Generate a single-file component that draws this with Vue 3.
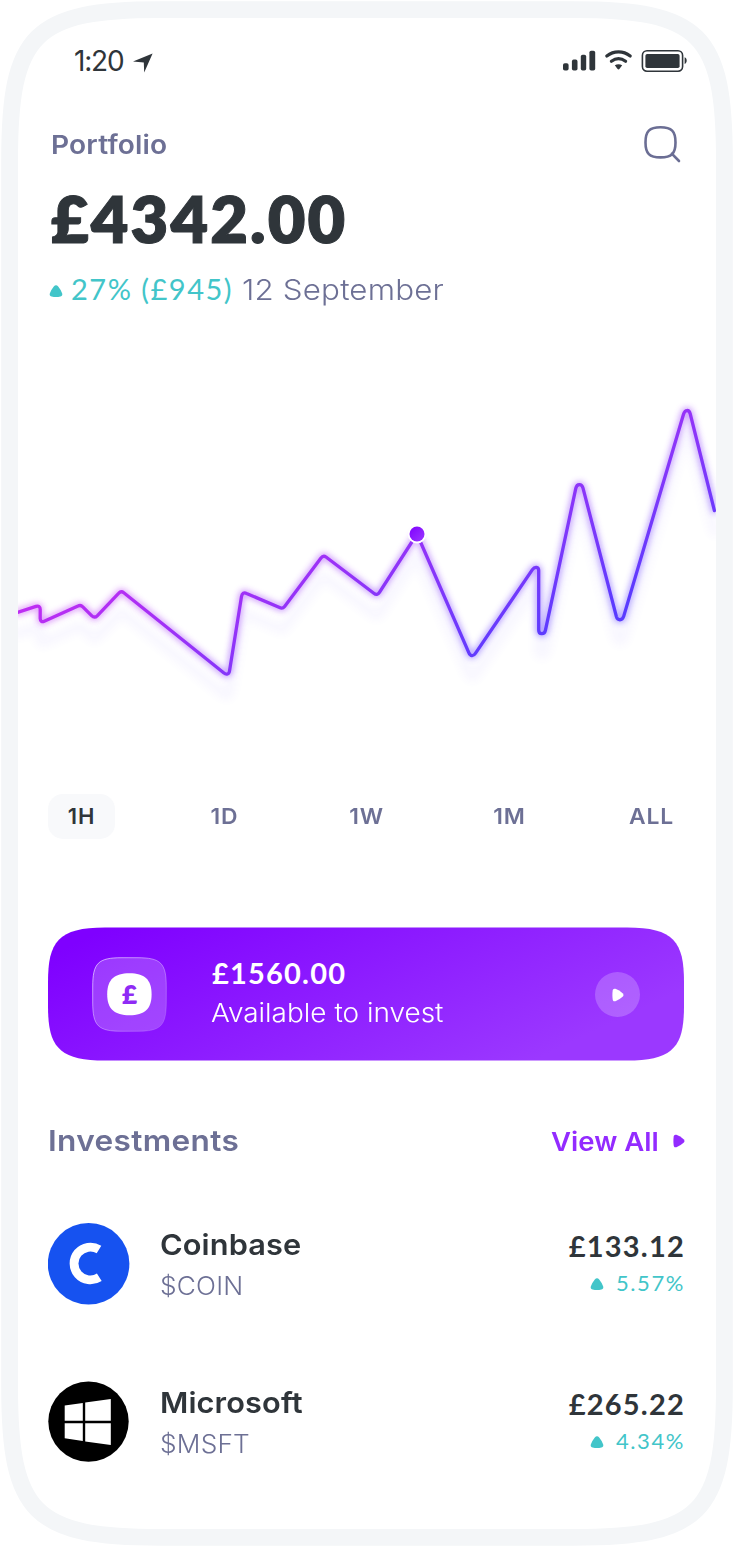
<script setup>
const ranges = ['1H', '1D', '1W', '1M', 'ALL']
const holdings = [
  { id: 'coin', name: 'Coinbase', ticker: '$COIN', price: '£133.12', change: '5.57%' },
  { id: 'msft', name: 'Microsoft', ticker: '$MSFT', price: '£265.22', change: '4.34%' }
]
const line = [
  'M17 612.6 L36 606.4 C38.6 605.6 40.2 606.8 40.2 609.2 V618.6 C40.2 621.2 42 622.2 44.2 621.2',
  'L78 606 C80 605 81.4 605.4 82.8 606.8 L91.6 615.6 C93.6 617.6 95.4 617.6 97.2 615.8',
  'L118.8 593.2 C120.4 591.4 122 591.4 123.8 592.8 L223.6 672.8 C226.4 675 229 674.4 229.5 671',
  'L241.5 596.4 C242.1 593 244 592.2 246.6 593.4 L279.6 607.6 C281.6 608.6 283.2 608.2 284.6 606.4',
  'L320.8 558.2 C322.4 556 324 555.6 326 557 L373.8 593.2 C376 595 378 594.8 379.6 592.2',
  'L417 534 L468.8 652.6 C470.4 656.4 473.2 656.6 475.4 653.4 L532.4 569.6 C534.8 566.2 538.7 566.8 538.7 570.6',
  'V630 C538.7 634.8 544.5 634.8 545.4 630.4 L575.8 488.4 C576.8 483.4 581.8 483.4 583 488.2',
  'L616.4 616.6 C617.6 620.8 622.2 620.8 623.6 616.6 L683.6 414 C685 409.4 689 409.4 690.2 413.8 L714.4 510.6'
].join(' ')
</script>

<template>
  <div class="phone">
    <svg class="frame" viewBox="0 0 733 1546">
      <path d="M160 9.6 H574 C700 9.6 724.4 34 724.4 160 V1387 C724.4 1513 700 1537.4 574 1537.4 H160 C34 1537.4 9.6 1513 9.6 1387 V160 C9.6 34 34 9.6 160 9.6 Z" />
    </svg>

    <div class="status">
      <span class="time">1:20</span>
      <svg class="arrow" width="20" height="20" viewBox="0 0 20 20"><path d="M19.6 .6 L11.2 19.6 L10.8 9.6 L0 8.6 Z" /></svg>
      <svg class="signals" width="126" height="22" viewBox="0 0 126 22">
        <rect x="1" y="13.2" width="5.6" height="7.4" rx="1.8" />
        <rect x="9.9" y="9.6" width="5.6" height="11" rx="1.8" />
        <rect x="18.8" y="4.8" width="5.4" height="15.8" rx="1.8" />
        <rect x="27.4" y="0.8" width="5.8" height="19.8" rx="1.8" />
        <g class="wifi">
          <path d="M44.8 6 C51.8 .5 61.2 .5 68.2 6" />
          <path d="M49.4 11.2 C53.8 7.9 59.2 7.9 63.6 11.2" />
        </g>
        <path d="M52.8 15.3 Q56.5 13 60.2 15.3 L57.6 18.8 Q56.5 20 55.4 18.8 Z" />
        <rect class="case" x="80.4" y=".8" width="40.2" height="20.4" rx="4.6" />
        <rect x="83.4" y="4" width="34.2" height="14" rx="1.8" />
        <path d="M122.6 7.2 C125.4 8.2 125.4 12.8 122.6 14 Z" />
      </svg>
    </div>

    <header class="head">
      <span class="portfolio">Portfolio</span>
      <svg width="40" height="38" viewBox="0 0 40 38">
        <path d="M18.5 2.3 C29.6 2.3 33.5 6.2 33.5 17.4 C33.5 28.5 29.6 32.4 18.5 32.4 C7.4 32.4 3.5 28.5 3.5 17.4 C3.5 6.2 7.4 2.3 18.5 2.3 Z M29.8 28.6 L37 36" />
      </svg>
    </header>
    <div class="total">£4342.00</div>
    <div class="delta">
      <svg class="up" width="14" height="12" viewBox="0 0 14 12"><path d="M4.8 1.6 Q7 -1.2 9.2 1.6 Q12 5 13.2 8.6 C13.6 10.4 12.8 11 11.4 11.4 Q7 12.4 2.6 11.4 C1.2 11 .4 10.4 .8 8.6 Q2 5 4.8 1.6 Z" /></svg>
      <span class="gain">27% (£945)</span>
      <span class="date">12 September</span>
    </div>

    <svg class="chart" width="698" height="340" viewBox="18 380 698 340">
      <defs>
        <linearGradient id="stroke" gradientUnits="userSpaceOnUse" x1="18" y1="600" x2="132" y2="840">
          <stop offset="0" stop-color="#c22cf2" />
          <stop offset=".35" stop-color="#9e31f7" />
          <stop offset=".7" stop-color="#7a38fb" />
          <stop offset="1" stop-color="#593bff" />
        </linearGradient>
        <linearGradient id="dot" x1="0" y1="0" x2="1" y2="1">
          <stop offset="0" stop-color="#7f00ff" />
          <stop offset="1" stop-color="#9b38ff" />
        </linearGradient>
        <filter id="glow" filterUnits="userSpaceOnUse" x="0" y="370" width="733" height="360"><feGaussianBlur stdDeviation="3.2" /></filter>
        <filter id="shade" filterUnits="userSpaceOnUse" x="0" y="370" width="733" height="360"><feGaussianBlur stdDeviation="4.5" /></filter>
      </defs>
      <path class="line shade" :d="line" transform="translate(0 21)" />
      <path class="line glow" :d="line" />
      <path class="line" :d="line" />
      <circle cx="417" cy="534.2" r="9.2" fill="#fff" />
      <circle cx="417" cy="534" r="7.5" fill="url(#dot)" />
    </svg>

    <nav class="ranges">
      <span v-for="(r, i) in ranges" :key="r" class="range" :class="{ active: i === 0 }">{{ r }}</span>
    </nav>

    <section class="card">
      <svg class="card-bg" viewBox="0 0 637 134">
        <defs>
          <linearGradient id="card" gradientUnits="userSpaceOnUse" x1="60" y1="0" x2="240" y2="380">
            <stop offset="0" stop-color="#7f00ff" />
            <stop offset=".72" stop-color="#9b38ff" />
            <stop offset="1" stop-color="#9b38ff" />
          </linearGradient>
        </defs>
        <path fill="url(#card)" d="M57 .5 H579 C626 .5 636 15 636 55 V79 C636 119 626 133.6 579 133.6 H57 C10 133.6 0 119 0 79 V55 C0 15 10 .5 57 .5 Z" />
      </svg>
      <div class="coin">
        <svg class="coin-bg" viewBox="0 0 75 75">
          <defs>
            <linearGradient id="edge" x1="0" y1="0" x2="1" y2="1">
              <stop offset="0" stop-color="#fff" stop-opacity=".65" />
              <stop offset="1" stop-color="#fff" stop-opacity=".08" />
            </linearGradient>
          </defs>
          <path fill="#fff" fill-opacity=".21" stroke="url(#edge)" d="M30 .7 H45 C69 .7 74.3 6 74.3 30 V45 C74.3 69 69 74.3 45 74.3 H30 C6 74.3 .7 69 .7 45 V30 C.7 6 6 .7 30 .7 Z" />
          <path fill="#fff" d="M37.5 16.2 C52.5 16.2 59.6 22.5 59.6 37.2 C59.6 52 52.5 58.2 37.5 58.2 C22.5 58.2 15.2 52 15.2 37.2 C15.2 22.5 22.5 16.2 37.5 16.2 Z" />
        </svg>
        <span class="pound">£</span>
      </div>
      <div class="cash">
        <div class="cash-sum">£1560.00</div>
        <div class="cash-note">Available to invest</div>
      </div>
      <div class="go">
        <svg width="12" height="14" viewBox="0 0 12 14"><path d="M3.4 .8 Q7.4 2.2 10.6 5.2 Q12.4 7 10.6 8.8 Q7.4 11.8 3.4 13.2 C1.8 13.7 1 13 .7 11.4 Q.1 7 .7 2.6 C1 1 1.8 .3 3.4 .8 Z" /></svg>
      </div>
    </section>

    <div class="section">
      <h2 class="title">Investments</h2>
      <a class="all"><span class="all-text">View All</span>
        <svg width="12" height="14" viewBox="0 0 12 14"><path d="M3.4 .8 Q7.4 2.2 10.6 5.2 Q12.4 7 10.6 8.8 Q7.4 11.8 3.4 13.2 C1.8 13.7 1 13 .7 11.4 Q.1 7 .7 2.6 C1 1 1.8 .3 3.4 .8 Z" /></svg>
      </a>
    </div>

    <div v-for="h in holdings" :key="h.id" class="holding">
      <svg v-if="h.id === 'coin'" width="82" height="82" viewBox="0 0 82 82">
        <circle cx="40.6" cy="40.8" r="40.8" fill="#1652f0" />
        <path d="M51.6 26.5 A16.4 16.4 0 1 0 51.9 54.3" fill="none" stroke="#fff" stroke-width="8.8" transform="translate(-.6 0)" />
      </svg>
      <svg v-else width="82" height="82" viewBox="0 0 82 82">
        <circle cx="40.5" cy="40.6" r="40.2" />
        <path fill="#fff" d="M16.7 24.6 L34.8 22 V39.8 H16.7 Z M37.2 21.5 L62.8 18 V39.8 H37.2 Z M16.7 42.2 H34.8 V60 L16.7 57.3 Z M37.2 42.2 H62.8 V64 L37.2 60.4 Z" />
      </svg>
      <div class="names">
        <div class="name">{{ h.name }}</div>
        <div class="ticker">{{ h.ticker }}</div>
      </div>
      <div class="values">
        <div class="price">{{ h.price }}</div>
        <div class="change">
          <svg class="up" width="14" height="12" viewBox="0 0 14 12"><path d="M4.8 1.6 Q7 -1.2 9.2 1.6 Q12 5 13.2 8.6 C13.6 10.4 12.8 11 11.4 11.4 Q7 12.4 2.6 11.4 C1.2 11 .4 10.4 .8 8.6 Q2 5 4.8 1.6 Z" /></svg>
          <span>{{ h.change }}</span>
        </div>
      </div>
    </div>
  </div>
</template>

<style>
body { background: #fff; }
</style>

<style scoped>
.phone {
  position: relative;
  box-sizing: border-box;
  width: 733px;
  height: 1546px;
  padding: 43px 48px 0;
  overflow: hidden;
  font-family: Inter, "Liberation Sans", sans-serif;
  color: #2f353a;
  white-space: nowrap;
}
.frame { position: absolute; left: 0; top: 0; width: 733px; height: 1546px; fill: #fff; stroke: #f4f6f8; stroke-width: 16.8; }
.status { position: relative; display: flex; height: 34px; margin-right: -3px; margin-left: 26px; line-height: 36px; }
.time { width: 59px; font-size: 28px; letter-spacing: -1.2px; }
.arrow { margin-top: 9.5px; fill: #2f353a; }
.signals { margin: 7px 0 0 auto; fill: #2f353a; }
.wifi { fill: none; stroke: #2f353a; stroke-width: 3.2; stroke-linecap: round; }
.case { fill: none; stroke: #2f353a; stroke-width: 1.6; }
.head { position: relative; display: flex; justify-content: space-between; height: 38px; margin-top: 48px; padding: 0 3px; line-height: 40px; }
.head svg { fill: none; stroke: #6b6e94; stroke-width: 2.6; stroke-linecap: round; }
/* The wide geometric look comes from a slight horizontal stretch */
.portfolio, .date, .cash-note, .title, .all-text, .name, .ticker, .range { transform-origin: 0 50%; }
.portfolio { transform: scaleX(1.08); font-size: 26px; font-weight: 570; letter-spacing: .15px; color: #6d7095; }
.total { position: relative; margin: 14px 0 0 3px; height: 80px; line-height: 82px; font-family: Lato, "Open Sans", sans-serif; font-size: 65px; font-weight: 800; letter-spacing: 2.1px; -webkit-text-stroke: 1px #2f353a; }
.delta { position: relative; display: flex; height: 36px; margin: 14px 0 0 1px; line-height: 36px; font-size: 29px; }
.up { fill: #42c5c9; }
.delta .up { margin-top: 14px; }
.gain { width: 171px; margin-left: 8px; font-family: Lato, "Open Sans", sans-serif; letter-spacing: 1.5px; color: #42c5c9; }
.date { transform: scaleX(1.08); line-height: 38px; font-weight: 350; letter-spacing: .15px; color: #6d7095; }
.chart { position: relative; display: block; margin: 73px 0 0 -30px; }
.line { fill: none; stroke: url(#stroke); stroke-width: 3.3; stroke-linecap: round; stroke-linejoin: round; }
.glow { filter: url(#glow); stroke-width: 6; opacity: .5; }
.shade { filter: url(#shade); stroke: #6a4dff; stroke-width: 10; opacity: .045; }
.ranges { position: relative; display: flex; justify-content: space-between; margin: 74px 0 0; }
.range { width: 67px; height: 45px; border-radius: 15px; line-height: 45px; text-align: center; font-size: 22px; font-weight: 560; letter-spacing: .8px; color: #6d7095; transform-origin: 50% 50%; }
.range + .range { transform: scaleX(1.04); }
.active { background: #f8f9fb; color: #2f353a; font-weight: 600; }
.card { position: relative; display: flex; box-sizing: border-box; width: 637px; height: 134px; margin-top: 88px; padding: 30px 45px 0 44px; color: #fff; }
.card-bg { position: absolute; left: 0; top: 0; width: 637px; height: 134px; }
.coin { position: relative; width: 75px; height: 75px; text-align: center; }
.coin-bg { position: absolute; left: 0; top: 0; width: 75px; height: 75px; }
.pound { position: relative; line-height: 75px; font-family: Lato, "Open Sans", sans-serif; font-weight: 800; font-size: 26px; color: #8f2bf5; }
.cash { position: relative; margin: -2px 0 0 45px; }
.cash-sum { height: 36px; line-height: 36px; font-family: Lato, "Open Sans", sans-serif; font-weight: 700; font-size: 29px; letter-spacing: 1.2px; }
.cash-note { transform: scaleX(1.075); height: 36px; margin: 4px 0 0 -1px; line-height: 36px; font-weight: 300; font-size: 26px; letter-spacing: 0; }
.go { position: relative; display: flex; align-items: center; justify-content: center; width: 45px; height: 45px; margin: 15px 0 0 auto; border-radius: 50%; background: rgba(255, 255, 255, .21); fill: #fff; }
.section { position: relative; display: flex; justify-content: space-between; width: 637px; height: 40px; margin-top: 60px; line-height: 40px; }
.title { transform: scaleX(1.09); margin: 0; font-size: 29px; font-weight: 560; letter-spacing: .3px; color: #6d7095; }
.all { display: flex; gap: 20px; font-size: 26px; color: #932bff; fill: #932bff; }
.all-text { transform: scaleX(1.06); line-height: 42px; font-weight: 560; }
.all svg { margin-top: 13px; }
.holding { position: relative; display: flex; width: 637px; height: 82px; margin-top: 62px; }
.holding + .holding { margin-top: 76px; }
.names { margin: 4px 0 0 30px; }
.name { transform: scaleX(1.06); height: 36px; line-height: 36px; font-size: 29px; font-weight: 600; letter-spacing: .1px; }
.ticker { transform: scaleX(1.05); height: 32px; margin: 7px 0 0; line-height: 33px; font-size: 25px; font-weight: 300; letter-spacing: .2px; color: #6d7095; }
.values { margin: 5px 0 0 auto; }
.price { height: 36px; line-height: 36px; font-family: Lato, "Open Sans", sans-serif; font-size: 29px; font-weight: 700; letter-spacing: 1.2px; text-align: right; }
.change { display: flex; justify-content: flex-end; height: 30px; margin-top: 4px; line-height: 30px; font-family: Lato, "Open Sans", sans-serif; font-size: 22px; letter-spacing: 1.6px; color: #42c5c9; }
.change .up { margin: 10px 12px 0 0; }
</style>
